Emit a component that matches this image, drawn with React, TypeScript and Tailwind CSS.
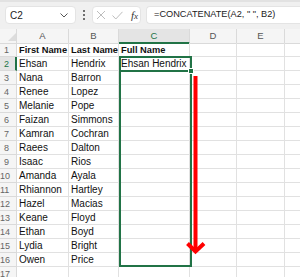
import React from "react";

const ROWS: [string, string][] = [
  ["Ehsan", "Hendrix"],
  ["Nana", "Barron"],
  ["Renee", "Lopez"],
  ["Melanie", "Pope"],
  ["Faizan", "Simmons"],
  ["Kamran", "Cochran"],
  ["Raees", "Dalton"],
  ["Isaac", "Rios"],
  ["Amanda", "Ayala"],
  ["Rhiannon", "Hartley"],
  ["Hazel", "Macias"],
  ["Keane", "Floyd"],
  ["Ethan", "Boyd"],
  ["Lydia", "Bright"],
  ["Owen", "Price"],
];

const COLS = ["A", "B", "C", "D", "E", ""];

const gridCols = "grid grid-cols-[17px_52px_50px_71px_47px_48px_40px]";

function FormulaBar() {
  return (
    <div className="h-[29px] bg-[#f0f0f0] border-t-2 border-[#e2e2e2] flex items-start pt-[4px] pl-[5px]">
      {/* name box */}
      <div className="w-[73px] h-[18px] bg-white rounded-[4px] border border-[#e4e4e4] flex items-center pl-[4px] pr-[6px] justify-between">
        <span className="text-[10px] text-[#222]">C2</span>
        <svg width="8" height="5" viewBox="0 0 8 5" className="mr-[1px]">
          <path d="M0.5 0.5 L4 4 L7.5 0.5" fill="none" stroke="#555" strokeWidth="1" />
        </svg>
      </div>
      {/* dots */}
      <div className="w-[17px] h-[18px] flex flex-col items-center justify-center gap-[2px]">
        <span className="w-[2px] h-[2px] bg-[#444] rounded-full" />
        <span className="w-[2px] h-[2px] bg-[#444] rounded-full" />
        <span className="w-[2px] h-[2px] bg-[#444] rounded-full" />
      </div>
      {/* cancel / enter / fx */}
      <div className="w-[51px] h-[18px] bg-white rounded-[4px] border border-[#e4e4e4] flex items-center pl-[3px]">
        <svg width="10" height="10" viewBox="0 0 10 10" className="ml-[0px]">
          <path d="M1 1 L9 9 M9 1 L1 9" stroke="#bdbdbd" strokeWidth="1" />
        </svg>
        <svg width="11" height="9" viewBox="0 0 11 9" className="ml-[6px]">
          <path d="M0.5 4.5 L3.8 8 L10.5 0.8" fill="none" stroke="#bdbdbd" strokeWidth="1" />
        </svg>
        <span className="ml-[8px] text-[11px] italic text-[#333] font-['Liberation_Serif',serif] leading-none">
          f<span className="text-[9px]">x</span>
        </span>
      </div>
      {/* formula input */}
      <div className="ml-[5px] w-[160px] h-[18px] bg-white rounded-l-[4px] border border-r-0 border-[#e4e4e4] flex items-center pl-[7px]">
        <span className="text-[9.2px] text-[#222] whitespace-nowrap">=CONCATENATE(A2, " ", B2)</span>
      </div>
    </div>
  );
}

function HeaderRow() {
  return (
    <div className={`${gridCols} h-[14px]`}>
      <div className="bg-[#f5f5f5] border-r border-b border-[#dadada] relative">
        <svg width="8" height="8" viewBox="0 0 8 8" className="absolute left-[8px] top-[4px]">
          <path d="M8 0 L8 8 L0 8 Z" fill="#dcdcdc" />
        </svg>
      </div>
      {COLS.map((c) =>
        c === "C" ? (
          <div
            key={c}
            className="bg-[#e4e4e4] border-r border-b-2 border-r-[#dadada] border-b-[#217346] text-[#217346] text-[9.5px] leading-[13px] text-center"
          >
            {c}
          </div>
        ) : (
          <div
            key={c || "F"}
            className="bg-[#f5f5f5] border-r border-b border-[#dadada] text-[#555] text-[9.5px] leading-[13px] text-center"
          >
            {c}
          </div>
        )
      )}
    </div>
  );
}

function RowHead({ n, active }: { n: number; active?: boolean }) {
  return active ? (
    <div className="bg-[#e4e4e4] border-r-2 border-b border-r-[#217346] border-b-[#dadada] text-[#217346] text-[9px] leading-[14px] text-right pr-[6px]">
      {n}
    </div>
  ) : (
    <div className="bg-[#f5f5f5] border-r border-b border-[#dadada] text-[#666] text-[9px] leading-[14px] text-right pr-[7px]">
      {n}
    </div>
  );
}

function Cell({ children, bold }: { children?: React.ReactNode; bold?: boolean }) {
  return (
    <div
      className={`border-r border-b border-[#e1e1e1] pl-[2px] leading-[14px] whitespace-nowrap overflow-visible text-[#111] ${
        bold ? "font-bold text-[9.3px]" : "text-[10px]"
      }`}
    >
      {children}
    </div>
  );
}

export default function App() {
  return (
    <div className="w-[300px] h-[277px] overflow-hidden bg-white relative font-['Liberation_Sans',Arial,sans-serif]">
      <FormulaBar />
      <HeaderRow />
      <div className={`${gridCols} auto-rows-[14px]`}>
        <RowHead n={1} />
        <Cell bold>First Name</Cell>
        <Cell bold>Last Name</Cell>
        <Cell bold>Full Name</Cell>
        <Cell />
        <Cell />
        <Cell />
        {ROWS.map(([first, last], i) => (
          <React.Fragment key={first}>
            <RowHead n={i + 2} active={i === 0} />
            <Cell>{first}</Cell>
            <Cell>{last}</Cell>
            <Cell>{i === 0 ? `${first} ${last}` : null}</Cell>
            <Cell />
            <Cell />
            <Cell />
          </React.Fragment>
        ))}
        <RowHead n={17} />
        <Cell />
        <Cell />
        <Cell />
        <Cell />
        <Cell />
        <Cell />
      </div>

      {/* selection range C2:C16 */}
      <div className="absolute left-[119px] top-[56px] w-[73px] h-[211px] border-2 border-[#217346] pointer-events-none" />
      {/* active cell C2 */}
      <div className="absolute left-[119px] top-[56px] w-[73px] h-[16px] border-2 border-[#217346] pointer-events-none" />
      {/* fill handle */}
      <div className="absolute left-[188px] top-[68px] w-[6px] h-[6px] bg-[#217346] border border-white pointer-events-none" />

      {/* red arrow */}
      <svg className="absolute left-0 top-0 pointer-events-none" width="300" height="277" viewBox="0 0 300 277">
        <path d="M195.5 76 L195.5 250" stroke="#ff0000" strokeWidth="4" />
        <path d="M187.5 243.5 L195.5 251.5 L204 243.5" fill="none" stroke="#ff0000" strokeWidth="4" strokeLinejoin="miter" />
      </svg>
    </div>
  );
}
